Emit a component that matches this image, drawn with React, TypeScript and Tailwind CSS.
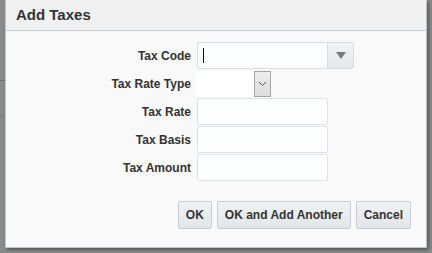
import React from 'react';

const font = { fontFamily: '"Liberation Sans", Arial, sans-serif' };

function Label({ children }: { children: React.ReactNode }) {
  return (
    <div className="w-[191px] pr-[6px] text-right text-[12px] font-bold text-[#333]">{children}</div>
  );
}

function TextBox({ className = '' }: { className?: string }) {
  return <div className={`h-[27px] w-[131px] rounded-[2px] border border-[#dfe4e8] bg-[#fdfefe] ${className}`} />;
}

function Btn({ children }: { children: React.ReactNode }) {
  return (
    <button className="h-[28px] rounded-[2px] border border-[#c4ced7] bg-gradient-to-b from-[#f0f2f4] to-[#e2e6ea] px-[7px] text-[12px] font-bold text-[#333]">
      {children}
    </button>
  );
}

export default function App() {
  return (
    <div style={font} className="relative h-[253px] w-[432px] overflow-hidden bg-[#8a8a8a]">
      <div className="absolute left-0 top-[80px] h-px w-[5px] bg-[#6f6f6f]" />
      <div className="absolute left-0 top-[116px] h-px w-[5px] bg-[#7a7a7a]" />
      <div className="ml-[5px] flex h-[248px] w-[422px] flex-col border-x border-b border-[#bcc7d2] bg-[#f9f9f9] shadow-[2px_2px_3px_rgba(0,0,0,0.35)]">
        <div className="flex h-[31px] items-center border-b border-[#c4ced8] bg-[#f0f0f0] pl-[10px] text-[15px] font-bold text-[#333]">
          Add Taxes
        </div>
        <div className="flex flex-col pt-[11px]">
          <div className="flex h-[27px] items-center">
            <Label>Tax Code</Label>
            <div className="flex h-[27px] items-center rounded-[2px] border border-[#d6dde3] bg-[#fcfdfe]">
              <div className="flex h-full w-[129px] items-center pl-[5px]">
                <div className="h-[15px] w-px bg-[#111]" />
              </div>
              <div className="flex h-full w-[26px] items-center justify-center border-l border-[#d6dde3] bg-gradient-to-b from-[#f2f4f6] to-[#e3e7eb]">
                <svg width="10" height="7" viewBox="0 0 10 7">
                  <path d="M0 0 H10 L5 7 Z" fill="#7a7a7a" />
                </svg>
              </div>
            </div>
          </div>
          <div className="mt-[1px] flex h-[27px] items-center">
            <Label>Tax Rate Type</Label>
            <div className="flex h-[26px] items-stretch">
              <div className="w-[57px] bg-white" />
              <div className="flex w-[17px] items-center justify-center border border-[#a6a6a6] bg-gradient-to-b from-[#eeeeee] to-[#dcdcdc]">
                <svg width="9" height="6" viewBox="0 0 9 6">
                  <path d="M1 1 L4.5 4.5 L8 1" fill="none" stroke="#555" strokeWidth="1" />
                </svg>
              </div>
            </div>
          </div>
          <div className="mt-[1px] flex h-[27px] items-center">
            <Label>Tax Rate</Label>
            <TextBox />
          </div>
          <div className="mt-[1px] flex h-[27px] items-center">
            <Label>Tax Basis</Label>
            <TextBox />
          </div>
          <div className="mt-[1px] flex h-[27px] items-center">
            <Label>Tax Amount</Label>
            <TextBox />
          </div>
        </div>
        <div className="mt-[20px] flex justify-end gap-[5px] pr-[15px]">
          <Btn>OK</Btn>
          <Btn>OK and Add Another</Btn>
          <Btn>Cancel</Btn>
        </div>
      </div>
    </div>
  );
}
